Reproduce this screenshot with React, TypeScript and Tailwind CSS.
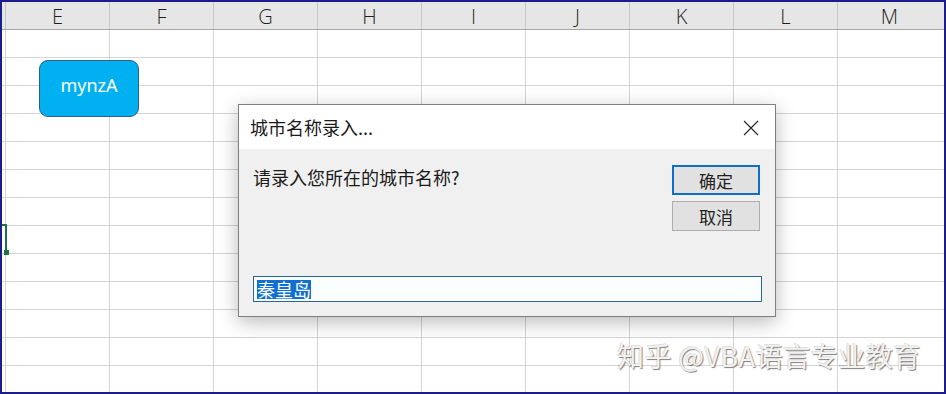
const columns = ["E", "F", "G", "H", "I", "J", "K", "L", "M"];
const rowCount = 13;

const cjk = "font-['Noto_Sans_CJK_SC','Noto_Sans',sans-serif]";

function HeaderRow() {
  return (
    <div className="flex h-[28px] border-b border-[#a6a6a6] bg-[#e6e6e6]">
      <div className="w-[3px] shrink-0" />
      {columns.map((c) => (
        <div
          key={c}
          className="flex w-[104px] shrink-0 items-center justify-center border-l border-[#c6c6c6] pt-[2px] font-['Open_Sans',sans-serif] text-[20px] font-light text-[#1f1f1f]"
        >
          {c}
        </div>
      ))}
    </div>
  );
}

function GridRow() {
  return (
    <div className="flex h-[28px] border-b border-[#d4d4d4]">
      <div className="w-[3px] shrink-0" />
      {columns.map((c) => (
        <div key={c} className="w-[104px] shrink-0 border-l border-[#d4d4d4]" />
      ))}
    </div>
  );
}

function InputDialog() {
  return (
    <div className="absolute left-[236px] top-[102px] flex w-[538px] flex-col border border-[#7f7f7f] bg-[#f0f0f0] shadow-[0_5px_18px_rgba(0,0,0,0.28)]">
      <div className="flex h-[44px] items-center justify-between bg-white pl-[11px] pr-[16px]">
        <span className={`${cjk} text-[18px] text-[#1a1a1a]`}>城市名称录入...</span>
        <svg width="16" height="16" viewBox="0 0 16 16" className="mt-[1px]">
          <path d="M1 1L15 15M15 1L1 15" stroke="#222" strokeWidth="1.1" fill="none" />
        </svg>
      </div>
      <div className="flex h-[167px] flex-col px-[14px] pt-[16px] pb-[14px]">
        <div className="flex h-[111px] items-start justify-between">
          <p className={`${cjk} text-[18px] leading-6 text-[#1a1a1a]`}>请录入您所在的城市名称?</p>
          <div className="mr-[1px] flex w-[88px] flex-col gap-[6px]">
            <button className={`${cjk} h-[30px] border-2 border-[#0f6fc6] bg-[#e1e1e1] text-[17px] leading-none text-[#222]`}>
              确定
            </button>
            <button className={`${cjk} h-[30px] border border-[#adadad] bg-[#e1e1e1] text-[17px] leading-none text-[#222]`}>
              取消
            </button>
          </div>
        </div>
        <div className="flex h-[26px] w-[509px] items-center border border-[#2a6792] bg-[#fbfeff] px-[3px]">
          <span className={`${cjk} bg-[#0f6fd0] text-[18px] leading-[19px] text-white`}>秦皇岛</span>
        </div>
      </div>
    </div>
  );
}

export default function App() {
  return (
    <div className="relative h-[394px] w-[946px] overflow-hidden border-2 border-[#1c1c8e] bg-white">
      <HeaderRow />
      {Array.from({ length: rowCount }).map((_, i) => (
        <GridRow key={i} />
      ))}

      {/* selected cell edge + fill handle */}
      <div className="absolute left-0 top-[222px] h-[29px] w-[5px] border-t-2 border-r-2 border-[#217346]" />
      <div className="absolute left-[2px] top-[248px] h-[5px] w-[5px] bg-[#217346]" />

      <div className="absolute left-[37px] top-[58px] flex h-[57px] w-[100px] items-center justify-center rounded-[9px] border-[1.5px] border-[#2c5f8c] bg-[#00b0f0] pb-[6px] font-['Noto_Sans',sans-serif] text-[18px] text-white">
        mynzA
      </div>

      <InputDialog />

      <div
        className={`absolute left-[615px] top-[334px] ${cjk} text-[27px] tracking-[0.5px] text-[#f2f2f2] [text-shadow:1px_1px_1px_rgba(0,0,0,0.5),-1px_-1px_0_rgba(0,0,0,0.15)]`}
      >
        知乎 @VBA语言专业教育
      </div>
    </div>
  );
}
